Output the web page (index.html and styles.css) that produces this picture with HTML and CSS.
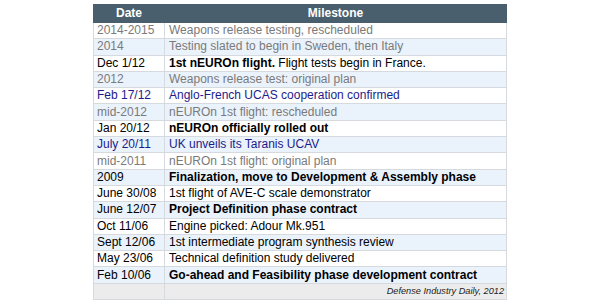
FILE: index.html
```html
<!DOCTYPE html>
<html>
<head>
<meta charset="utf-8">
<link rel="stylesheet" href="styles.css">
</head>
<body>
<table class="timeline">
  <thead>
    <tr><th class="c-date">Date</th><th class="c-ms">Milestone</th></tr>
  </thead>
  <tbody>
    <tr class="grey"><td>2014-2015</td><td>Weapons release testing, rescheduled</td></tr>
    <tr class="grey alt"><td>2014</td><td>Testing slated to begin in Sweden, then Italy</td></tr>
    <tr><td>Dec 1/12</td><td><b>1st nEUROn flight.</b> Flight tests begin in France.</td></tr>
    <tr class="grey alt"><td>2012</td><td>Weapons release test: original plan</td></tr>
    <tr class="navy"><td>Feb 17/12</td><td>Anglo-French UCAS cooperation confirmed</td></tr>
    <tr class="grey alt"><td>mid-2012</td><td>nEUROn 1st flight: rescheduled</td></tr>
    <tr><td>Jan 20/12</td><td><b>nEUROn officially rolled out</b></td></tr>
    <tr class="navy alt"><td>July 20/11</td><td>UK unveils its Taranis UCAV</td></tr>
    <tr class="grey"><td>mid-2011</td><td>nEUROn 1st flight: original plan</td></tr>
    <tr class="alt"><td>2009</td><td><b>Finalization, move to Development &amp; Assembly phase</b></td></tr>
    <tr><td>June 30/08</td><td>1st flight of AVE-C scale demonstrator</td></tr>
    <tr class="alt"><td>June 12/07</td><td><b>Project Definition phase contract</b></td></tr>
    <tr><td>Oct 11/06</td><td>Engine picked: Adour Mk.951</td></tr>
    <tr class="alt"><td>Sept 12/06</td><td>1st intermediate program synthesis review</td></tr>
    <tr><td>May 23/06</td><td>Technical definition study delivered</td></tr>
    <tr class="alt"><td>Feb 10/06</td><td><b>Go-ahead and Feasibility phase development contract</b></td></tr>
  </tbody>
  <tfoot>
    <tr><td></td><td class="source">Defense Industry Daily, 2012</td></tr>
  </tfoot>
</table>
</body>
</html>
```

FILE: styles.css
```css
html, body {
  margin: 0;
  padding: 0;
  background: #ffffff;
}
body {
  padding-top: 4px;
  font-family: "Liberation Sans", Arial, sans-serif;
}
.timeline {
  margin: 0 auto;
  width: 414px;
  border-collapse: collapse;
  font-size: 12px;
  color: #000;
}
.timeline th {
  background: #4a5f6d;
  color: #ffffff;
  font-weight: bold;
  height: 17px;
  padding: 0;
  line-height: 17px;
  text-align: center;
  border: 1px solid #4a5f6d;
}
.c-date { width: 70px; }
.timeline td {
  height: 16.3px;
  padding: 0 3px 0 3px;
  line-height: 15px;
  border: 1px solid #d6dadf;
  white-space: nowrap;
  box-sizing: border-box;
}
.timeline td + td { padding-left: 4px; }
.timeline tr.alt td { background: #eaf2fc; }
.timeline tr.grey td { color: #7a7a7a; }
.timeline tr.navy td { color: #1c1c8a; }
.timeline tfoot td {
  background: #ececec;
  height: 16px;
}
.timeline td.source {
  text-align: right;
  font-style: italic;
  font-size: 9.2px;
  color: #222;
  padding-right: 2px;
}
```
